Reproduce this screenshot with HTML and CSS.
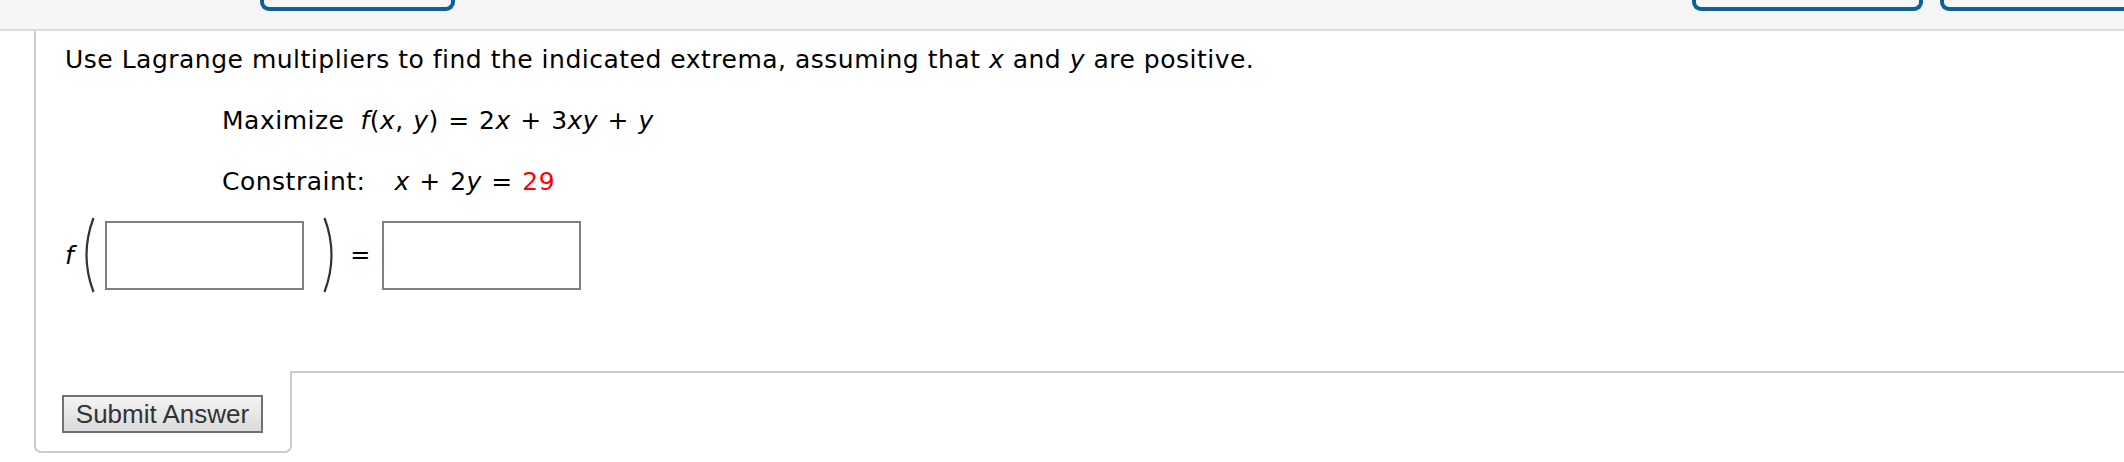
FILE: index.html
```html
<!DOCTYPE html>
<html>
<head>
<meta charset="utf-8">
<link rel="stylesheet" href="styles.css">
</head>
<body>
<div class="topbar">
  <div class="tbtn b1"></div>
  <div class="tbtn b2"></div>
  <div class="tbtn b3"></div>
</div>
<div class="question">
  <div class="qbody">
    <p class="prompt">Use Lagrange multipliers to find the indicated extrema, assuming that <i>x</i> and <i>y</i> are positive.</p>
    <div class="eq eq-max"><span class="label">Maximize</span><span class="math"><i>f</i>(<i>x</i>, <i>y</i>) = 2<i>x</i> + 3<i>xy</i> + <i>y</i></span></div>
    <div class="eq eq-con"><span class="label">Constraint:</span><span class="math"><i>x</i> + 2<i>y</i> = <span class="red">29</span></span></div>
    <div class="answer">
      <i class="fn">f</i>
      <svg class="paren" width="16" height="76" viewBox="0 0 16 76"><path d="M14.5 1 Q0.5 38 14.5 75" fill="none" stroke="#333" stroke-width="2.2"/></svg>
      <span class="box box1"></span>
      <svg class="paren rparen" width="16" height="76" viewBox="0 0 16 76"><path d="M1.5 1 Q15.5 38 1.5 75" fill="none" stroke="#333" stroke-width="2.2"/></svg>
      <span class="eqsign">=</span>
      <span class="box box2"></span>
    </div>
  </div>
  <div class="footer">
    <div class="submit-cell"><button class="submit">Submit Answer</button></div>
    <div class="rest"></div>
  </div>
</div>
</body>
</html>
```
FILE: styles.css
```css
html, body {
  margin: 0;
  padding: 0;
  background: #fff;
}
body {
  width: 2124px;
  font-family: "DejaVu Sans", Verdana, sans-serif;
  color: #000;
}
.topbar {
  background: #f6f6f6;
  border-bottom: 2px solid #dddddd;
  display: flex;
  align-items: flex-end;
  overflow: hidden;
  padding: 0 0 18px 260px;
  box-sizing: content-box;
  height: 11px;
}
.tbtn {
  flex: none;
  height: 40px;
  border: 4px solid #0b6198;
  border-top: none;
  border-radius: 0 0 9px 9px;
  box-sizing: border-box;
}
.b1 { width: 195px; }
.b2 { width: 231px; margin-left: 1237px; }
.b3 { width: 240px; margin-left: 17px; }

.question {
  margin-left: 34px;
}
.qbody {
  border-left: 2px solid #cccccc;
  padding: 15px 0 78px 29px;
  font-size: 25px;
  letter-spacing: 0.5px;
}
.prompt {
  margin: 0;
  line-height: 28px;
}
.eq {
  margin-left: 157px;
  line-height: 28px;
  display: flex;
}
.eq-max { margin-top: 33px; }
.eq-con { margin-top: 33px; }
.eq-max .label { margin-right: 16px; }
.eq-con .label { margin-right: 29px; }
.math { white-space: pre; word-spacing: 1px; }
.red { color: #ff0000; }

.answer {
  display: flex;
  align-items: center;
  margin-top: 21px;
  height: 76px;
}
.fn {
  font-size: 25px;
  margin-right: 5px;
}
.paren { flex: none; display: block; }
.box {
  display: block;
  width: 199px;
  height: 69px;
  border: 2px solid #808080;
  box-sizing: border-box;
  background: #fff;
}
.box1 { margin-left: 10px; }
.rparen { margin-left: 19px; }
.eqsign { margin-left: 11px; font-size: 24px; letter-spacing: 0; }
.box2 { margin-left: 12px; }

.footer {
  display: flex;
}
.submit-cell {
  width: 258px;
  box-sizing: border-box;
  border-left: 2px solid #cccccc;
  border-right: 2px solid #cccccc;
  border-bottom: 2px solid #cccccc;
  border-radius: 0 0 7px 7px;
  padding: 24px 0 18px 26px;
}
.submit {
  display: block;
  width: 201px;
  height: 38px;
  margin: 0;
  padding: 0;
  border: 2px solid #707070;
  border-radius: 0;
  background: linear-gradient(#f4f4f4, #dadada);
  font-family: "Liberation Sans", Arial, sans-serif;
  font-size: 26px;
  color: #333;
  line-height: 32px;
}
.rest {
  flex: 1;
  border-top: 2px solid #cccccc;
  border-top-left-radius: 4px;
  margin-left: -2px;
}
```
